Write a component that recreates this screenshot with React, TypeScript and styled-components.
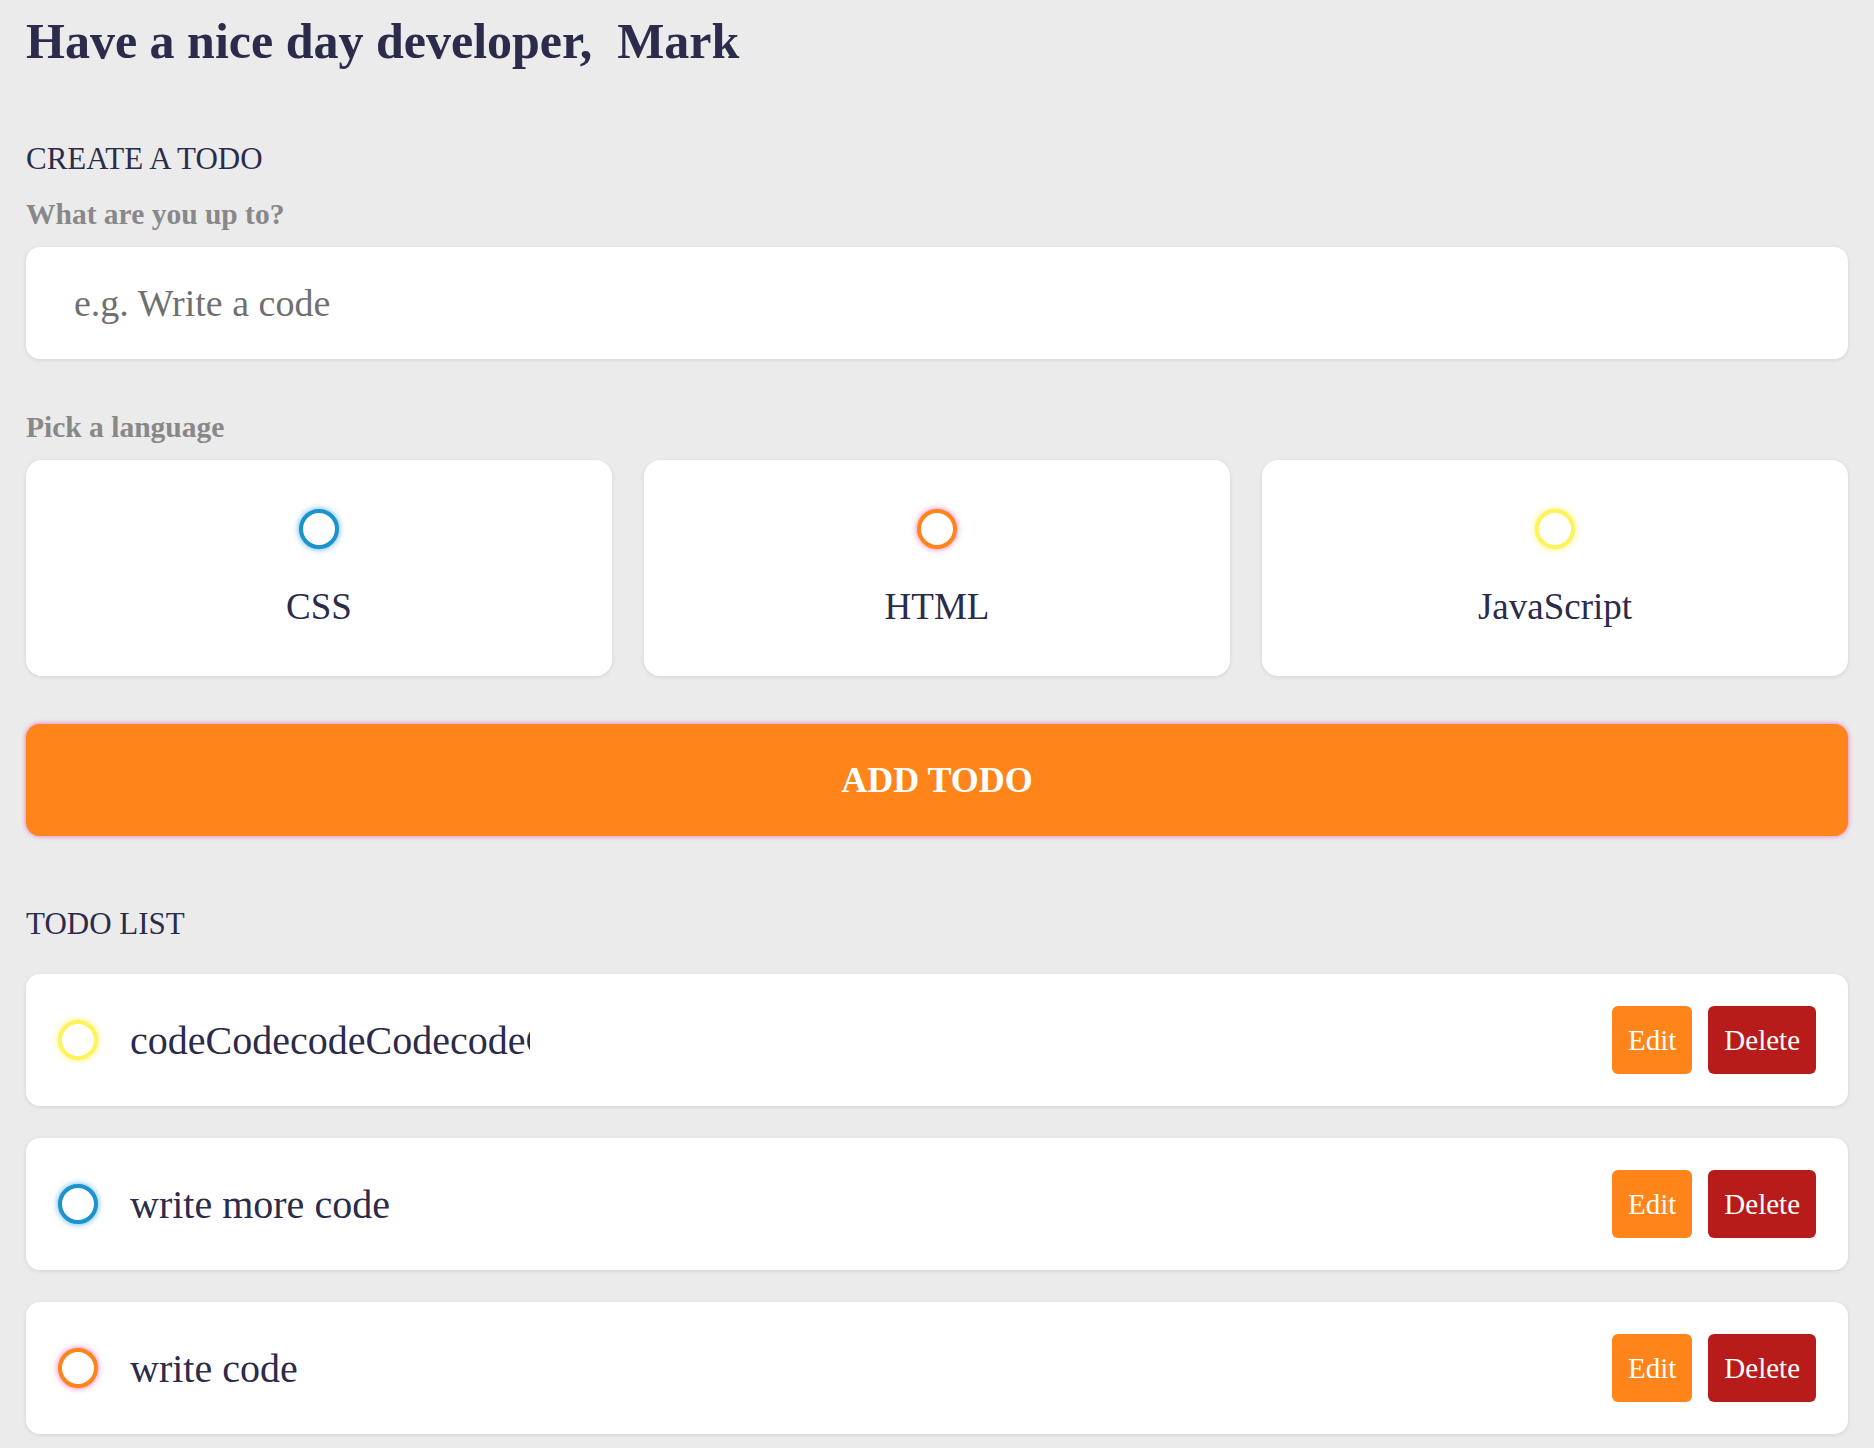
import React from "react";
import styled, { createGlobalStyle } from "styled-components";

type Lang = "css" | "html" | "js";

const langColors: Record<Lang, { ring: string; glow: string }> = {
    css: { ring: "#1c93d1", glow: "rgba(28, 147, 209, 0.75)" },
    html: { ring: "#ff8419", glow: "rgba(234, 64, 164, 0.75)" },
    js: { ring: "#fff35c", glow: "rgba(255, 236, 60, 0.8)" },
};

const languages: { id: Lang; label: string }[] = [
    { id: "css", label: "CSS" },
    { id: "html", label: "HTML" },
    { id: "js", label: "JavaScript" },
];

// the first one is longer than its column, the reference clips it the same way
const todos: { id: number; text: string; lang: Lang }[] = [
    { id: 1, text: "codeCodecodeCodecodeCodecodeCodecode", lang: "js" },
    { id: 2, text: "write more code", lang: "css" },
    { id: 3, text: "write code", lang: "html" },
];

export default function App() {
    return (
        <>
            <GlobalStyle />
            <Page>
                <Greeting>{"Have a nice day developer,\u00a0 Mark"}</Greeting>

                <Section>
                    <SectionTitle $top={77}>Create a todo</SectionTitle>
                    <FieldLabel>What are you up to?</FieldLabel>
                    <TextInput type="text" placeholder="e.g. Write a code" />

                    <FieldLabel $top={54}>Pick a language</FieldLabel>
                    <LangGrid>
                        {languages.map((l) => (
                            <LangCard key={l.id}>
                                <Bubble $lang={l.id} />
                                <LangName>{l.label}</LangName>
                            </LangCard>
                        ))}
                    </LangGrid>

                    <AddButton type="button">ADD TODO</AddButton>
                </Section>

                <Section>
                    <SectionTitle $top={72}>Todo list</SectionTitle>
                    <TodoList>
                        {todos.map((t) => (
                            <TodoItem key={t.id}>
                                <Bubble $lang={t.lang} />
                                <TodoText>{t.text}</TodoText>
                                <Actions>
                                    <ActionButton $variant="edit">Edit</ActionButton>
                                    <ActionButton $variant="delete">Delete</ActionButton>
                                </Actions>
                            </TodoItem>
                        ))}
                    </TodoList>
                </Section>
            </Page>
        </>
    );
}

const GlobalStyle = createGlobalStyle`
    * {
        box-sizing: border-box;
    }
    body {
        margin: 0;
        background: #ebebeb;
        color: #313154;
        font-family: "Liberation Serif", "Times New Roman", serif;
    }
`;

const Page = styled.main`
    padding: 16px 26px 14px;
`;

const Greeting = styled.h1`
    margin: 0;
    font-size: 50px;
    line-height: 50px;
    font-weight: 700;
    color: #2b2b4b;
`;

const Section = styled.section`
    display: flex;
    flex-direction: column;
`;

const SectionTitle = styled.h3<{ $top?: number }>`
    margin: ${(p) => p.$top ?? 78}px 0 0;
    font-size: 31px;
    line-height: 31px;
    font-weight: 400;
    text-transform: uppercase;
    color: #2b2b4b;
`;

const FieldLabel = styled.h4<{ $top?: number }>`
    margin: ${(p) => p.$top ?? 26}px 0 18px;
    font-size: 29.5px;
    line-height: 29px;
    font-weight: 700;
    color: #888888;
`;

const TextInput = styled.input`
    display: block;
    width: 100%;
    height: 112px;
    padding: 0 48px;
    border: none;
    outline: none;
    border-radius: 14px;
    background: #ffffff;
    box-shadow: 0 1px 4px rgba(0, 0, 0, 0.1);
    font-family: inherit;
    font-size: 38px;
    color: #313154;

    &::placeholder {
        color: #707070;
    }
`;

const LangGrid = styled.div`
    display: grid;
    grid-template-columns: repeat(3, 1fr);
    gap: 32px;
`;

const LangCard = styled.label`
    display: flex;
    flex-direction: column;
    align-items: center;
    height: 216px;
    padding-top: 49px;
    border-radius: 16px;
    background: #ffffff;
    box-shadow: 0 1px 4px rgba(0, 0, 0, 0.1);
    cursor: pointer;
`;

const Bubble = styled.span<{ $lang: Lang }>`
    flex: none;
    display: block;
    width: 40px;
    height: 40px;
    border-radius: 50%;
    border: 4px solid ${(p) => langColors[p.$lang].ring};
    background: #ffffff;
    box-shadow: 0 0 6px ${(p) => langColors[p.$lang].glow};
`;

const LangName = styled.div`
    margin-top: 39px;
    font-size: 37px;
    line-height: 37px;
    color: #2b2b4b;
`;

const AddButton = styled.button`
    margin-top: 48px;
    width: 100%;
    height: 112px;
    border: none;
    border-radius: 14px;
    background: #ff8419;
    box-shadow: 0 0 5px rgba(234, 64, 164, 0.75);
    color: #ffffff;
    font-family: inherit;
    font-size: 36px;
    font-weight: 700;
    cursor: pointer;
`;

const TodoList = styled.div`
    display: flex;
    flex-direction: column;
    gap: 32px;
    margin-top: 35px;
`;

const TodoItem = styled.div`
    display: flex;
    align-items: center;
    height: 132px;
    padding: 0 32px;
    border-radius: 14px;
    background: #ffffff;
    box-shadow: 0 1px 4px rgba(0, 0, 0, 0.1);
`;

const TodoText = styled.div`
    width: 400px;
    margin-left: 32px;
    overflow: hidden;
    white-space: nowrap;
    font-size: 40px;
    color: #2b2b4b;
`;

const Actions = styled.div`
    display: flex;
    gap: 16px;
    margin-left: auto;
`;

const ActionButton = styled.button<{ $variant: "edit" | "delete" }>`
    height: 68px;
    padding: 0 16px;
    border: none;
    border-radius: 6px;
    background: ${(p) => (p.$variant === "edit" ? "#ff8419" : "#b71c1a")};
    color: #ffffff;
    font-family: inherit;
    font-size: 29px;
    cursor: pointer;
`;
